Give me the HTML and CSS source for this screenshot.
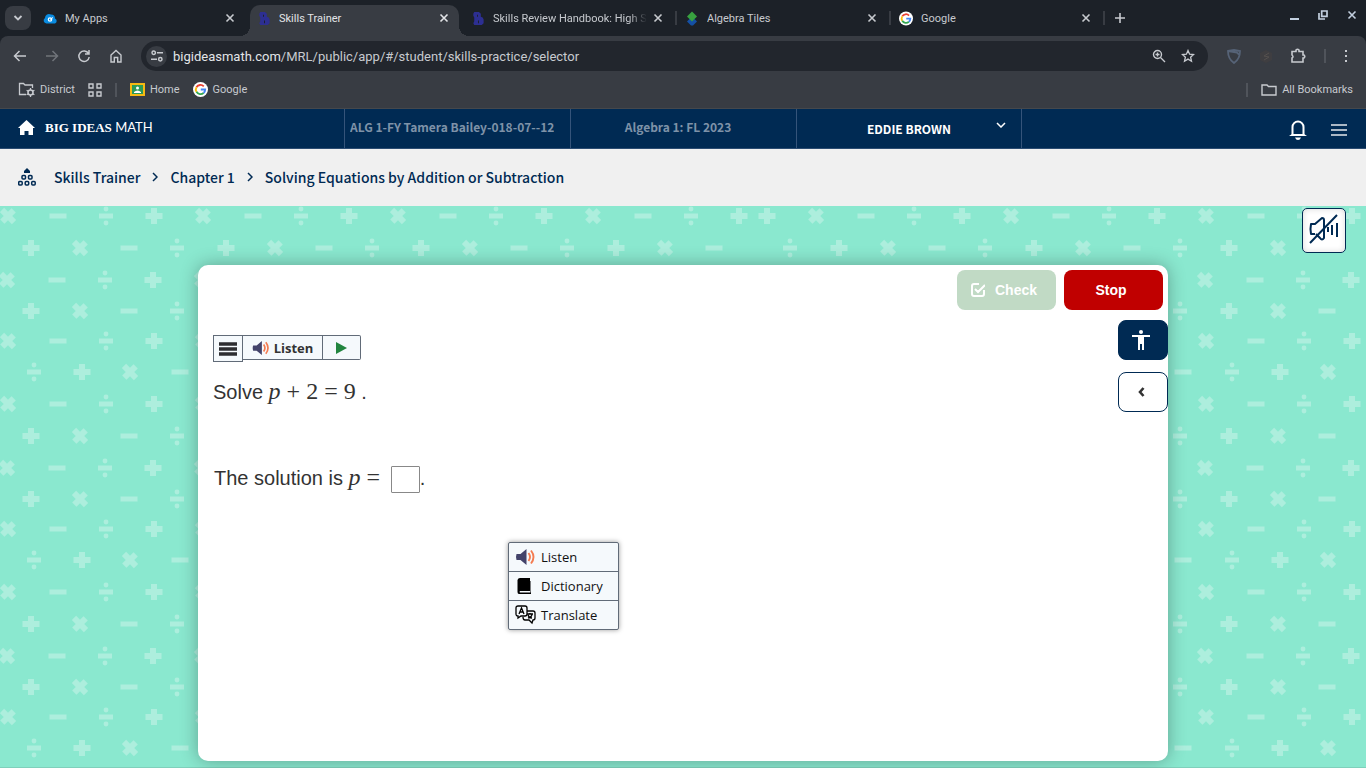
FILE: index.html
```html
<!DOCTYPE html>
<html lang="en">
<head>
    <meta charset="UTF-8">
    <meta name="viewport" content="width=device-width, initial-scale=1.0">
    <title>Skills Trainer</title>
    <link rel="stylesheet" href="styles.css">
</head>
<body>
    <!-- shared icons -->
    <svg class="defs" width="0" height="0" aria-hidden="true">
        <symbol id="close" viewBox="0 0 10 10"><path d="M1.500 1.500l7 7M8.500 1.500l-7 7" fill="none" stroke="currentColor" stroke-width="1.600"/></symbol>
        <symbol id="google" viewBox="0 0 16 16">
            <circle cx="8" cy="8" r="8" fill="#fff"/>
            <path d="M11.500 4.600A5 5 0 0 0 3.700 5.500" fill="none" stroke="#ea4335" stroke-width="2"/>
            <path d="M3.700 5.500a5 5 0 0 0 0 5" fill="none" stroke="#fbbc05" stroke-width="2"/>
            <path d="M3.700 10.500a5 5 0 0 0 7.600 1.200" fill="none" stroke="#34a853" stroke-width="2"/>
            <path d="M11.300 11.700A5 5 0 0 0 13 8H8.300" fill="none" stroke="#4285f4" stroke-width="2"/>
        </symbol>
        <symbol id="bim" viewBox="0 0 14 16"><path d="M3 1h5l2 2v3l2 1 1 2v4l-2 2H3l-1-2 1-2V7L2 5V3z" fill="#2d2f92"/><path d="M6 4h1v2H6zM7 10h1v3H7z" fill="#1c2128"/></symbol>
        <symbol id="speaker" viewBox="0 0 20 16">
            <path d="M1 5h4l6-5v16l-6-5H1q-1-3 0-6z" fill="#43436a"/>
            <path d="M13 4q3 4 0 8M15.500 1.500q5 6.500 0 13" fill="none" stroke="#f47b50" stroke-width="1.900"/>
        </symbol>
    </svg>

    <div class="browser">
        <div class="tab-strip">
            <button class="tab-search" aria-label="Search tabs"><svg width="10" height="6" viewBox="0 0 10 6"><path d="M1.500 1L5 4.500 8.500 1" fill="none" stroke="currentColor" stroke-width="1.800"/></svg></button>
            <div class="tab">
                <svg class="tab-icon" viewBox="0 0 14 14"><path d="M3.500 12A3 3 0 0 1 2 6.500 4 4 0 0 1 8 3a4 4 0 0 1 4 4 2.700 2.700 0 0 1 0 5z" fill="#0a8be0"/><circle cx="7" cy="8" r="1.700" fill="none" stroke="#fff" stroke-width="1.200"/><path d="M7 8l3-2" stroke="#fff"/></svg>
                <span class="tab-title">My Apps</span>
                <button class="tab-close" aria-label="Close tab"><svg width="10" height="10"><use href="#close"/></svg></button>
            </div>
            <div class="tab active">
                <svg class="tab-icon"><use href="#bim"/></svg>
                <span class="tab-title">Skills Trainer</span>
                <button class="tab-close" aria-label="Close tab"><svg width="10" height="10"><use href="#close"/></svg></button>
            </div>
            <div class="tab">
                <svg class="tab-icon"><use href="#bim"/></svg>
                <span class="tab-title fade">Skills Review Handbook: High S</span>
                <button class="tab-close" aria-label="Close tab"><svg width="10" height="10"><use href="#close"/></svg></button>
            </div>
            <div class="tab divided">
                <svg class="tab-icon" viewBox="0 0 14 14"><path d="M7 5l5 5-4 4H6l-4-4z" fill="#1450a5"/><path d="M7 0l5 5-5 5-5-5z" fill="#38a13f"/></svg>
                <span class="tab-title">Algebra Tiles</span>
                <button class="tab-close" aria-label="Close tab"><svg width="10" height="10"><use href="#close"/></svg></button>
            </div>
            <div class="tab divided">
                <svg class="tab-icon"><use href="#google"/></svg>
                <span class="tab-title">Google</span>
                <button class="tab-close" aria-label="Close tab"><svg width="10" height="10"><use href="#close"/></svg></button>
            </div>
            <button class="new-tab divided" aria-label="New tab"><svg width="10" height="10" viewBox="0 0 10 10"><path d="M5 0v10M0 5h10" stroke="currentColor" stroke-width="1.600"/></svg></button>
            <div class="window-buttons">
                <button aria-label="Minimize"><svg width="10" height="10" viewBox="0 0 10 10"><path d="M1 9h9" stroke="currentColor" stroke-width="2"/></svg></button>
                <button aria-label="Restore"><svg width="10" height="10" viewBox="0 0 10 10"><path d="M3.700 1h5.300v5.300H3.700zM1 3v6h6" fill="none" stroke="currentColor" stroke-width="1.700"/></svg></button>
                <button aria-label="Close window"><svg width="10" height="10"><use href="#close"/></svg></button>
            </div>
        </div>

        <div class="toolbar">
            <button aria-label="Back"><svg width="14" height="12" viewBox="0 0 14 12"><path d="M13 6H2M6.500 1L1.500 6l5 5" fill="none" stroke="currentColor" stroke-width="1.500"/></svg></button>
            <button class="dim" aria-label="Forward"><svg width="14" height="12" viewBox="0 0 14 12"><path d="M1 6h11M7.500 1l5 5-5 5" fill="none" stroke="currentColor" stroke-width="1.500"/></svg></button>
            <button aria-label="Reload"><svg width="14" height="14" viewBox="0 0 14 14"><path d="M11.500 4.500A5.200 5.200 0 1 0 12.200 8M12 1v4H8" fill="none" stroke="currentColor" stroke-width="1.500"/></svg></button>
            <button aria-label="Home"><svg width="14" height="14" viewBox="0 0 14 14"><path d="M2 13V6l5-4.500L12 6v7H8.700V8.500H5.300V13z" fill="none" stroke="currentColor" stroke-width="1.400"/></svg></button>
            <div class="omnibox">
                <button class="site-info" aria-label="Site information"><svg width="12" height="12" viewBox="0 0 12 12"><g fill="none" stroke="currentColor" stroke-width="1.500"><circle cx="2.700" cy="2.700" r="1.700"/><path d="M6 2.700h6M0 9.300h6"/><circle cx="9.300" cy="9.300" r="1.700"/></g></svg></button>
                <div class="url"><b>bigideasmath.com</b>/MRL/public/app/#/student/skills-practice/selector</div>
                <button aria-label="Zoom"><svg width="14" height="14" viewBox="0 0 14 14"><g fill="none" stroke="currentColor" stroke-width="1.400"><circle cx="5.500" cy="5.500" r="4"/><path d="M8.500 8.500L13 13M5.500 3.500v4M3.500 5.500h4"/></g></svg></button>
                <button aria-label="Bookmark"><svg width="14" height="14" viewBox="0 0 14 14"><path d="M7 1.500l1.600 3.700 4 .3-3 2.700.9 4L7 10.100l-3.500 2.100.9-4-3-2.700 4-.3z" fill="none" stroke="currentColor" stroke-width="1.300"/></svg></button>
            </div>
            <button class="extension" aria-label="Shield extension"><svg width="16" height="15" viewBox="0 0 16 15"><path d="M2 2l6-1 6 1q0 8-6 12Q2 10 2 2zM2 2l9 1.500 2 2" fill="none" stroke="#566377" stroke-width="1.800"/></svg></button>
            <button class="extension" aria-label="Hexagon extension"><svg width="12" height="13" viewBox="0 0 12 13"><path d="M6 0l6 3v7l-6 3-6-3V3z" fill="#3f3e41"/><path d="M9 3L4 6l5 1-5 3" fill="none" stroke="#55504e"/></svg></button>
            <button class="extension" aria-label="Extensions"><svg width="16" height="16" viewBox="0 0 16 16"><path d="M2 3.500h4V2q1.500-1.500 3 0v1.500h4V7h1q1.500 1.500 0 3h-1v4H2v-4q2-1.200 0-3z" fill="none" stroke="currentColor" stroke-width="1.600"/></svg></button>
            <span class="bar"></span>
            <button class="menu" aria-label="Menu"><svg width="4" height="14" viewBox="0 0 4 14"><path d="M1 1h2v2H1zM1 6h2v2H1zM1 11h2v2H1z" fill="currentColor"/></svg></button>
        </div>

        <nav class="bookmarks" aria-label="Bookmarks">
            <a href="#"><svg width="17" height="15" viewBox="0 0 17 15"><path d="M8 12.500H1.500v-11h4L7 3h7.500v3" fill="none" stroke="currentColor" stroke-width="1.300"/><circle cx="12.500" cy="10.500" r="2.500" fill="none" stroke="currentColor" stroke-width="1.600"/><path d="M12.500 6v2M12.500 13v2M8.600 8.300l1.800 1M14.600 11.700l1.800 1M8.600 12.700l1.800-1M14.600 9.300l1.800-1" stroke="currentColor" stroke-width="1.300"/></svg>District</a>
            <a href="#" aria-label="Apps"><svg width="14" height="14" viewBox="0 0 14 14"><path d="M1 1h4v4H1zM9 1h4v4H9zM1 9h4v4H1zM9 9h4v4H9z" fill="none" stroke="currentColor" stroke-width="1.400"/></svg></a>
            <span class="bar"></span>
            <a href="#"><svg width="15" height="13" viewBox="0 0 15 13"><path d="M0 0h15v13H0z" fill="#f5b912"/><path d="M2 2h11v9H2z" fill="#2c9a57"/><circle cx="7.500" cy="5" r="1.500" fill="#fff"/><path d="M4 9q3.500-3 7 0v1H4z" fill="#fff"/></svg>Home</a>
            <a href="#"><svg width="15" height="15"><use href="#google"/></svg>Google</a>
            <span class="bar push"></span>
            <a href="#"><svg width="16" height="12" viewBox="0 0 16 12"><path d="M1 1h5l1.500 1.500H15V11H1z" fill="none" stroke="currentColor" stroke-width="1.400"/></svg>All Bookmarks</a>
        </nav>
    </div>

    <header class="site-header">
        <a class="logo" href="#">
            <svg width="17" height="16" viewBox="0 0 17 16"><path d="M8.500 0L17 8h-2v7h-4.500v-4h-4v4H2V8H0z" fill="#fff"/></svg>
            <span><b>BIG IDEAS</b> MATH</span>
        </a>
        <div class="header-cell">
            <select class="class-select" aria-label="Class" disabled><option>ALG 1-FY Tamera Bailey-018-07--12</option></select>
        </div>
        <div class="header-cell">
            <select class="class-select" aria-label="Book" disabled><option>Algebra 1: FL 2023</option></select>
        </div>
        <button class="header-cell user">EDDIE BROWN <svg width="10" height="6" viewBox="0 0 10 6"><path d="M1 1l4 4 4-4" fill="none" stroke="#fff" stroke-width="1.500"/></svg></button>
        <div class="header-tools">
            <button aria-label="Notifications"><svg width="18" height="20" viewBox="0 0 18 20"><path d="M3.500 15V7a5.500 5.500 0 0 1 11 0v8" fill="none" stroke="#fff" stroke-width="2"/><path d="M0 16l3-2h12l3 2zM6 17.500h6q-1 2.500-3 2.500t-3-2.500z" fill="#fff"/></svg></button>
            <button aria-label="Menu"><svg width="16" height="12" viewBox="0 0 16 12"><path d="M0 1h16M0 6h16M0 11h16" stroke="#e3e7ec" stroke-width="1.600"/></svg></button>
        </div>
    </header>

    <nav class="breadcrumb" aria-label="Breadcrumb">
        <svg width="18" height="18" viewBox="0 0 18 18"><path d="M9 0l3 3v2H6V3z" fill="#002a53"/><g fill="none" stroke="#002a53" stroke-width="1.500"><rect x="4" y="7.500" width="3.500" height="3.500" rx="1"/><rect x="10.500" y="7.500" width="3.500" height="3.500" rx="1"/><rect x=".7" y="13.500" width="3.500" height="3.500" rx="1"/><rect x="7.200" y="13.500" width="3.500" height="3.500" rx="1"/><rect x="13.700" y="13.500" width="3.500" height="3.500" rx="1"/></g></svg>
        <a href="#">Skills Trainer</a>
        <svg class="chevron" width="6" height="10" viewBox="0 0 6 10"><path d="M1 1l4 4-4 4" fill="none" stroke="#002a53" stroke-width="1.500"/></svg>
        <a href="#">Chapter 1</a>
        <svg class="chevron" width="6" height="10" viewBox="0 0 6 10"><path d="M1 1l4 4-4 4" fill="none" stroke="#002a53" stroke-width="1.500"/></svg>
        <a href="#">Solving Equations by Addition or Subtraction</a>
    </nav>

    <main class="stage">
        <!-- operator wallpaper -->
        <svg class="wallpaper" width="100%" height="100%" aria-hidden="true">
            <defs>
                <g id="minus"><path d="M-8.500-2.500h17v5h-17z"/></g>
                <g id="plus"><path d="M-3-8h6v5h5.500v6H3v5h-6V3h-5.500v-6H-3z"/></g>
                <g id="times"><use href="#plus" transform="rotate(45)"/></g>
                <g id="divide"><path d="M-7-2.500H7v5H-7z"/><circle cy="-7" r="2.400"/><circle cy="7" r="2.400"/></g>
                <g id="row"><use href="#times" x="8"/><use href="#minus" x="58"/><use href="#divide" x="106"/><use href="#plus" x="154"/><use href="#times" x="203"/></g>
                <g id="row-shift"><use href="#plus" x="31"/><use href="#times" x="80"/><use href="#minus" x="129"/><use href="#divide" x="177"/></g>
                <g id="row-end"><use href="#divide" x="34"/><use href="#plus" x="82"/><use href="#times" x="130"/><use href="#minus" x="180"/></g>
                <pattern id="ops" width="195" height="188" patternUnits="userSpaceOnUse">
                    <g fill="#adeedd"><use href="#row" y="10"/><use href="#row-shift" y="42"/><use href="#row" x="-1" y="74"/><use href="#row-shift" y="105"/><use href="#row" y="135"/><use href="#row-end" y="166"/></g>
                </pattern>
                <pattern id="ops-right" href="#ops" x="28"/>
            </defs>
            <rect width="752" height="100%" fill="url(#ops)"/>
            <rect x="752" width="100%" height="100%" fill="url(#ops-right)"/>
        </svg>

        <button class="mute" aria-label="Unmute"><svg width="32" height="30" viewBox="0 0 32 30"><g fill="none" stroke="#002a53" stroke-width="2"><path d="M7 20H3q-1-5 0-10h4l7-6q2 0 2 2v18q-2 3-4 0L8 20M2 29L29 1" stroke-linejoin="round"/><path d="M20 13v5M24 11v10M29 9v14"/></g></svg></button>

        <section class="card">
            <div class="card-actions">
                <button class="btn check" disabled><svg width="14" height="14" viewBox="0 0 14 14"><path d="M8 1H3Q1 1 1 3v8q0 2 2 2h8q2 0 2-2V7M4 6l3 3 7-7" fill="none" stroke="#fff" stroke-width="2"/></svg>Check</button>
                <button class="btn stop">Stop</button>
            </div>
            <div class="card-body">
                <div class="question">
                    <div class="listen-bar">
                        <button class="listen-menu" aria-label="Options"><svg width="18" height="14" viewBox="0 0 18 14"><path d="M0 2h18M0 7h18M0 12h18" stroke="#2d2d30" stroke-width="3.500"/></svg></button>
                        <button class="listen"><svg width="18" height="14"><use href="#speaker"/></svg>Listen</button>
                        <button class="play" aria-label="Play"><svg width="11" height="12" viewBox="0 0 11 12"><path d="M0 0l11 6-11 6z" fill="#22853f"/></svg></button>
                    </div>
                    <p>Solve <span class="math"><i>p</i> + 2 = 9</span> .</p>
                    <p class="answer"><label for="solution">The solution is <span class="math"><i>p</i> =</span></label> <input id="solution" type="text">.</p>
                </div>
                <div class="side-tools">
                    <button class="access" aria-label="Accessibility"><svg width="18" height="20" viewBox="0 0 18 20"><circle cx="9" cy="2" r="2" fill="#fff"/><path d="M0 5h18v2h-6v13h-2v-6H8v6H6V7H0z" fill="#fff"/></svg></button>
                    <button class="collapse" aria-label="Expand panel"><svg width="8" height="12" viewBox="0 0 8 12"><path d="M6.500 2L3 6l3.500 4" fill="none" stroke="#333" stroke-width="2.600"/></svg></button>
                </div>
            </div>

            <div class="popup">
                <button><svg width="21" height="16"><use href="#speaker"/></svg>Listen</button>
                <button><svg width="21" height="16" viewBox="0 0 21 16"><path d="M5 0h10v13H5q-1 1 0 1.500h10.500V3H16v13H4q-1.500 0-1.500-2V2Q3 0 5 0z"/></svg>Dictionary</button>
                <button><svg width="21" height="20" viewBox="0 0 21 20"><g fill="none" stroke="#000" stroke-width="1.300"><path d="M3 1h7q2 0 2 2v6q0 2-2 2H6l-3 2v-2Q1 11 1 9V3q0-2 2-2zM12 6h6q2 0 2 2v5q0 2-2 2l-1 3-3-3h-4q-2 0-2-3"/><path d="M4 9l2.500-6L9 9M5 7h3M12 9h6M15 8v1M13 13q4-1 4-4M13 10q1 3 4 3"/></g></svg>Translate</button>
            </div>
        </section>
    </main>
</body>
</html>
```
FILE: styles.css
```css
* {
    box-sizing: border-box;
}

body {
    margin: 0;
    min-height: 100vh;
    display: flex;
    flex-direction: column;
    font-family: "Liberation Sans", Arial, sans-serif;
    color: #333;
}

button {
    display: flex;
    align-items: center;
    justify-content: center;
    padding: 0;
    border: 0;
    background: none;
    color: inherit;
    font: inherit;
}

a {
    color: inherit;
    text-decoration: none;
}

svg {
    flex: none;
}

.defs {
    position: absolute;
}

/* Browser window */
.browser {
    background: #1c2128;
    color: #c7cacf;
    font-family: Roboto, sans-serif;
    font-size: 11px;
    border-bottom: 1px solid #45484c;
}

.tab-strip {
    display: flex;
    height: 36px;
    padding-left: 5px;
}

.tab-search {
    width: 26px;
    height: 24px;
    margin: 6px 5px 0 0;
    border-radius: 8px;
    background: #383c43;
}

.tab {
    position: relative;
    display: flex;
    align-items: center;
    flex: 0 1 214px;
    min-width: 0;
    padding: 0 15px 0 7px;
}

.tab.active {
    flex-basis: 209px;
    margin: 5px 5px 0 0;
    padding: 0 10px 5px 7px;
    border-radius: 10px 10px 0 0;
    background: #383c43;
    color: #e3e5e8;
}

.tab.active::before,
.tab.active::after {
    content: "";
    position: absolute;
    bottom: 0;
    width: 10px;
    height: 10px;
}

.tab.active::before {
    right: 100%;
    background: radial-gradient(circle at 0 0, transparent 10px, #383c43 10px);
}

.tab.active::after {
    left: 100%;
    background: radial-gradient(circle at 100% 0, transparent 10px, #383c43 10px);
}

.tab-icon {
    width: 14px;
    height: 15px;
}

.tab-title {
    flex: 1;
    min-width: 0;
    margin: 0 6px 0 8px;
    overflow: hidden;
    white-space: nowrap;
}

.fade {
    mask-image: linear-gradient(to right, #000 88%, transparent);
}

.divided::before {
    content: "";
    position: absolute;
    left: -3px;
    top: 11px;
    width: 2px;
    height: 14px;
    background: #383c43;
}

.new-tab {
    position: relative;
    width: 28px;
}

.window-buttons {
    display: flex;
    gap: 19px;
    margin-left: auto;
    padding: 0 9px 6px 0;
    color: #c3d0e0;
}

.toolbar {
    display: flex;
    align-items: center;
    height: 40px;
    padding: 0 18px 0 13px;
    gap: 18px;
    border-radius: 8px 8px 0 0;
    background: #383c43;
}

.dim {
    color: #70747a;
}

.omnibox {
    display: flex;
    align-items: center;
    flex: 1;
    height: 30px;
    padding: 0 13px 0 5px;
    gap: 15px;
    border-radius: 15px;
    background: #22262d;
}

.site-info {
    width: 21px;
    height: 21px;
    border-radius: 50%;
    background: #383c43;
}

.url {
    flex: 1;
    margin-left: -9px;
    font-size: 13px;
}

.url b {
    font-weight: 400;
    color: #e3e5e8;
}

.bar {
    width: 2px;
    height: 14px;
    background: #50545b;
}

.bookmarks {
    display: flex;
    align-items: center;
    height: 32px;
    padding: 0 13px 5px 18px;
    gap: 13px;
    background: #383c43;
}

.bookmarks a {
    display: flex;
    align-items: center;
    gap: 5px;
}

.bookmarks .push {
    margin-left: auto;
}

/* Site header */
.site-header {
    display: grid;
    grid-template-columns: 344px repeat(3, minmax(0, 226px)) 1fr;
    height: 40px;
    border-bottom: 1px solid #2b4c72;
    background: #002a53;
    color: #fff;
    font-family: "Noto Sans CJK SC", sans-serif;
    font-size: 12px;
}

.logo {
    display: flex;
    align-items: center;
    gap: 10px;
    padding: 0 0 2px 18px;
    font-family: Lato, sans-serif;
    font-size: 13px;
}

.logo b {
    font-family: "Liberation Serif", serif;
}

.header-cell {
    display: flex;
    align-items: center;
    padding: 0 16px 4px 5px;
    border-left: 1px solid #35547a;
}

.class-select {
    width: 100%;
    padding: 0;
    border: 0;
    appearance: none;
    background: none;
    color: #7e92a8;
    font: inherit;
    font-weight: 700;
    text-align: center;
    opacity: 1;
}

.user {
    justify-content: flex-end;
    gap: 45px;
    padding: 0 15px 0 0;
    border-right: 1px solid #35547a;
    font-weight: 700;
}

.user svg {
    margin-bottom: 8px;
}

.header-tools {
    display: flex;
    justify-content: flex-end;
    gap: 24px;
    padding: 2px 19px 0 0;
}

.breadcrumb {
    display: flex;
    align-items: center;
    height: 57px;
    padding: 0 18px 2px;
    background: #f0f0f0;
    color: #002a53;
    font-family: "Noto Sans CJK SC", sans-serif;
    font-size: 14px;
    font-weight: 500;
}

.breadcrumb a:first-of-type {
    margin-left: 18px;
}

.chevron {
    margin: 0 12px;
}

/* Exercise */
.stage {
    position: relative;
    display: flex;
    flex: 1;
    justify-content: center;
    padding: 59px 20px 6px;
    border-bottom: 1px solid #7fd0bb;
    background: #8ae8cf;
}

.wallpaper {
    position: absolute;
    inset: 0;
}

.mute {
    position: absolute;
    top: 2px;
    right: 20px;
    width: 44px;
    height: 45px;
    padding-bottom: 4px;
    border: 1px solid #002a53;
    border-radius: 5px;
    background: #fff;
    box-shadow: inset 0 0 6px rgba(0, 0, 0, 0.15);
}

.card {
    position: relative;
    width: 100%;
    max-width: 970px;
    border-radius: 10px;
    background: #fff;
    box-shadow: 0 0 18px rgba(0, 0, 0, 0.3);
}

.card-actions {
    display: flex;
    justify-content: flex-end;
    gap: 8px;
    padding: 5px;
}

.btn {
    gap: 10px;
    width: 99px;
    height: 40px;
    padding-right: 5px;
    border-radius: 8px;
    color: #fff;
    font-size: 14px;
    font-weight: bold;
}

.check {
    background: #c1dac5;
}

.stop {
    background: #c00000;
}

.card-body {
    display: flex;
    justify-content: space-between;
}

.question {
    padding: 20px 15px;
    font-size: 20px;
}

.question p {
    margin: 17px 0 0;
    line-height: 24px;
}

.question .answer {
    margin-top: 61px;
    padding-left: 1px;
}

.math {
    font-family: "Liberation Serif", serif;
    font-size: 24px;
}

.answer input {
    width: 29px;
    height: 27px;
    margin: 0 0 0 5px;
    padding: 0;
    border: 1px solid #888;
    border-radius: 1px;
    vertical-align: middle;
    font-size: 18px;
}

.listen-bar {
    display: flex;
    align-items: flex-start;
    font-family: "Open Sans", sans-serif;
    font-size: 13px;
    font-weight: bold;
}

.listen-bar button {
    height: 25px;
    border: 1px solid #616b78;
    border-left: 0;
    background: #f5f9fc;
}

.listen-bar .listen-menu {
    width: 30px;
    height: 27px;
    border-left: 1px solid #616b78;
}

.listen {
    gap: 4px;
    width: 80px;
}

.play {
    width: 38px;
    border-radius: 0 2px 2px 0;
}

.side-tools {
    display: flex;
    flex-direction: column;
    gap: 12px;
    padding-top: 5px;
}

.side-tools button {
    width: 50px;
    height: 40px;
    padding-right: 4px;
    border: 1px solid #002a53;
    border-radius: 8px;
    background: #fff;
}

.side-tools .access {
    background: #002a53;
}

/* Text tools menu */
.popup {
    position: absolute;
    left: 310px;
    top: 277px;
    width: 111px;
    border: 1px solid #616b78;
    border-radius: 2px;
    background: #f5f9fc;
    box-shadow: 0 0 5px rgba(0, 0, 0, 0.4);
    font-family: "Open Sans", sans-serif;
    font-size: 13px;
    color: #111;
}

.popup button {
    justify-content: flex-start;
    gap: 5px;
    width: 100%;
    height: 28px;
    padding-left: 6px;
}

.popup button + button {
    height: 29px;
    border-top: 1px solid #616b78;
}
```
